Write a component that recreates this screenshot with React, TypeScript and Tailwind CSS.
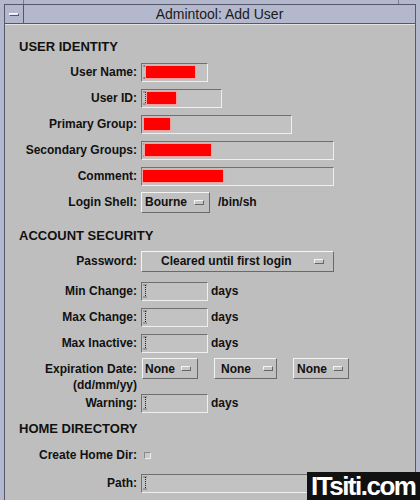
import React from 'react';

const font = { fontFamily: '"Liberation Sans", Arial, sans-serif' };

// sunken text field with an I-beam caret and optional red redaction bar
const Field = ({ className, bar, dotted }: { className: string; bar?: string; dotted?: boolean }) => (
  <div className={`h-[19px] flex items-center bg-[#c2c2c2] border border-t-[#6f6f6f] border-l-[#6f6f6f] border-b-[#efefef] border-r-[#efefef] ${className}`}>
    <svg width="5" height="14" viewBox="0 0 5 14" className="ml-[1px] shrink-0">
      <path
        d="M0.5 1h4M2.5 1v12M0.5 13h4"
        stroke="#1e1e1e"
        strokeWidth="1"
        strokeDasharray={dotted ? '1 1' : undefined}
        fill="none"
      />
    </svg>
    {bar && <div className={`h-[12px] bg-[#ff0000] shadow-[0_0_1px_1px_#f6a0a0] ${bar}`} />}
  </div>
);

const Indicator = () => (
  <div className="w-[10px] h-[5px] bg-[#c6c6c6] border border-t-[#f4f4f4] border-l-[#f4f4f4] border-b-[#666] border-r-[#666]" />
);

// raised Motif option menu button
const OptionButton = ({ label, className, textClass, indClass }: { label: string; className: string; textClass: string; indClass: string }) => (
  <div className={`h-[21px] flex items-center bg-[#c0c0c0] border border-t-[#f4f4f4] border-l-[#f4f4f4] border-b-[#6a6a6a] border-r-[#6a6a6a] ${className}`}>
    <span className={`text-[12px] font-bold text-[#111] ${textClass}`}>{label}</span>
    <div className={indClass}>
      <Indicator />
    </div>
  </div>
);

const Row = ({ label, children, className = 'h-[26px]' }: { label: string; children?: React.ReactNode; className?: string }) => (
  <div className={`flex items-center ${className}`}>
    <div className="w-[133px] text-right text-[12px] font-bold text-[#111] pr-[1px]">{label}</div>
    <div className="ml-[3px] flex items-center">{children}</div>
  </div>
);

const Heading = ({ children, className }: { children: React.ReactNode; className: string }) => (
  <div className={`flex items-center pl-[14px] text-[13px] font-bold text-[#111] ${className}`}>{children}</div>
);

const Days = () => <span className="ml-[3px] text-[12px] font-bold text-[#111]">days</span>;

export default function App() {
  return (
    <div className="w-[420px] h-[500px] relative overflow-hidden bg-[#b4b8cd] flex flex-col px-[4px]" style={font}>
      {/* top frame strip */}
      <div className="h-[4px] flex shrink-0">
        <div className="w-[20px] border-r border-[#7a7c8c]" />
        <div className="flex-1" />
        <div className="w-[18px] border-l border-[#7a7c8c]" />
      </div>

      <div className="flex-1 flex flex-col border-x border-[#55576a]">
        {/* title bar */}
        <div className="h-[20px] flex shrink-0 border-y border-[#55576a]">
          <div className="w-[19px] border-r border-[#55576a] flex items-center justify-center">
            <div className="w-[10px] h-[3px] bg-[#e8e8f0] border border-b-[#55576a] border-r-[#55576a] border-t-[#fafafa] border-l-[#fafafa]" />
          </div>
          <div className="flex-1 flex items-center justify-center text-[14px] text-[#1a1a1a] pt-[1px]">
            Admintool: Add User
          </div>
        </div>

        {/* body */}
        <div className="flex-1 bg-[#bebebe] border-t border-[#e4e4e4] pt-[9px]">
          <Heading className="h-[25px]">USER IDENTITY</Heading>
          <Row label="User Name:">
            <Field className="w-[67px]" bar="ml-[-2px] w-[49px]" />
          </Row>
          <Row label="User ID:">
            <Field className="w-[81px]" bar="ml-[-1px] w-[29px]" dotted />
          </Row>
          <Row label="Primary Group:">
            <Field className="w-[151px]" bar="ml-[-4px] w-[26px]" dotted />
          </Row>
          <Row label="Secondary Groups:">
            <Field className="w-[193px]" bar="ml-[-3px] w-[66px]" dotted />
          </Row>
          <Row label="Comment:">
            <Field className="w-[193px]" bar="ml-[-5px] w-[80px]" dotted />
          </Row>
          <Row label="Login Shell:">
            <OptionButton label="Bourne" className="w-[69px]" textClass="ml-[3px]" indClass="ml-[7px]" />
            <span className="ml-[8px] text-[12px] font-bold text-[#111]">/bin/sh</span>
          </Row>

          <Heading className="h-[25px] mt-[8px]">ACCOUNT SECURITY</Heading>
          <Row label="Password:">
            <OptionButton
              label="Cleared until first login"
              className="w-[193px]"
              textClass="ml-[19px]"
              indClass="ml-[22px]"
            />
          </Row>
          <Row label="Min Change:" className="h-[26px] mt-[4px]">
            <Field className="w-[67px]" dotted />
            <Days />
          </Row>
          <Row label="Max Change:">
            <Field className="w-[67px]" dotted />
            <Days />
          </Row>
          <Row label="Max Inactive:">
            <Field className="w-[67px]" dotted />
            <Days />
          </Row>
          <div className="flex items-start h-[34px]">
            <div className="w-[133px] text-right text-[12px] font-bold text-[#111] pr-[1px] pt-[5px] leading-[16px]">
              Expiration Date:
              <br />
              (dd/mm/yy)
            </div>
            <div className="ml-[4px] pt-[2px] flex gap-[16px]">
              <OptionButton label="None" className="w-[56px]" textClass="ml-[2px]" indClass="ml-[6px]" />
              <OptionButton label="None" className="w-[63px]" textClass="ml-[6px]" indClass="ml-[12px]" />
              <OptionButton label="None" className="w-[56px]" textClass="ml-[3px]" indClass="ml-[6px]" />
            </div>
          </div>
          <Row label="Warning:">
            <Field className="w-[67px]" dotted />
            <Days />
          </Row>

          <Heading className="h-[26px]">HOME DIRECTORY</Heading>
          <Row label="Create Home Dir:">
            <div className="ml-[3px] w-[7px] h-[7px] bg-[#c8c8c8] border border-t-[#8a8a8a] border-l-[#8a8a8a] border-b-[#eeeeee] border-r-[#eeeeee]" />
          </Row>
          <Row label="Path:" className="h-[26px] mt-[2px]">
            <Field className="w-[260px]" dotted />
          </Row>
        </div>
      </div>

      {/* watermark overlay */}
      <div className="absolute left-[307px] top-[472px] w-[113px] h-[28px] bg-[#111] flex items-center">
        <span className="ml-[4px] text-[26px] leading-none font-bold text-white tracking-[-1.5px] whitespace-nowrap">
          ITsiti.com
        </span>
      </div>
    </div>
  );
}
